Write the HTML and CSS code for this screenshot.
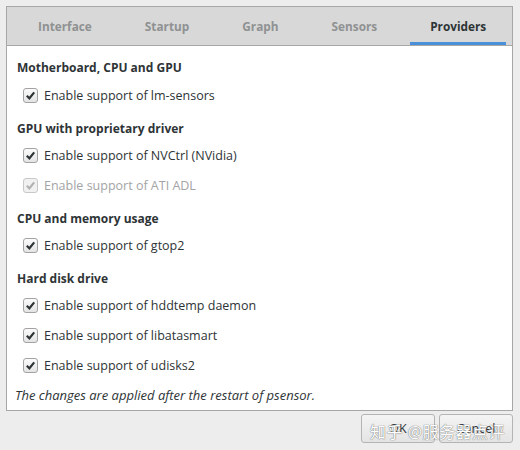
FILE: index.html
```html
<!DOCTYPE html>
<html>
<head>
<meta charset="utf-8">
<link rel="stylesheet" href="styles.css">
</head>
<body>
<div class="dialog">
  <div class="notebook">
    <div class="tabs">
      <div class="tab">Interface</div>
      <div class="tab">Startup</div>
      <div class="tab">Graph</div>
      <div class="tab">Sensors</div>
      <div class="tab active">Providers</div>
    </div>
    <div class="page">
      <div class="section">
        <div class="heading first">Motherboard, CPU and GPU</div>
        <label class="row"><span class="check"><svg viewBox="0 0 14 14"><path d="M3 7.2 L5.8 10 L11 3.6" /></svg></span>Enable support of lm-sensors</label>
      </div>
      <div class="section">
        <div class="heading">GPU with proprietary driver</div>
        <label class="row"><span class="check"><svg viewBox="0 0 14 14"><path d="M3 7.2 L5.8 10 L11 3.6" /></svg></span>Enable support of NVCtrl (NVidia)</label>
        <label class="row disabled"><span class="check"><svg viewBox="0 0 14 14"><path d="M3 7.2 L5.8 10 L11 3.6" /></svg></span>Enable support of ATI ADL</label>
      </div>
      <div class="section">
        <div class="heading">CPU and memory usage</div>
        <label class="row"><span class="check"><svg viewBox="0 0 14 14"><path d="M3 7.2 L5.8 10 L11 3.6" /></svg></span>Enable support of gtop2</label>
      </div>
      <div class="section">
        <div class="heading">Hard disk drive</div>
        <label class="row"><span class="check"><svg viewBox="0 0 14 14"><path d="M3 7.2 L5.8 10 L11 3.6" /></svg></span>Enable support of hddtemp daemon</label>
        <label class="row"><span class="check"><svg viewBox="0 0 14 14"><path d="M3 7.2 L5.8 10 L11 3.6" /></svg></span>Enable support of libatasmart</label>
        <label class="row"><span class="check"><svg viewBox="0 0 14 14"><path d="M3 7.2 L5.8 10 L11 3.6" /></svg></span>Enable support of udisks2</label>
      </div>
      <div class="note">The changes are applied after the restart of psensor.</div>
    </div>
  </div>
  <div class="actions">
    <button class="btn">OK</button>
    <button class="btn">Cancel</button>
    <span class="watermark">知乎 @服务器点评</span>
  </div>
</div>
</body>
</html>
```
FILE: styles.css
```css
html, body {
  margin: 0;
  padding: 0;
  background: #ededed;
  font-family: "Open Sans", "Noto Sans", "Noto Sans CJK SC", sans-serif;
  font-size: 12.5px;
  color: #2e3436;
}
.dialog {
  padding: 6px 7px 0 6px;
}
.notebook {
  border: 1px solid #a7a7a7;
  background: #ffffff;
  height: 403px;
  display: flex;
  flex-direction: column;
}
.tabs {
  height: 38px;
  background: #d8d8d8;
  border-bottom: 1px solid #a7a7a7;
  display: flex;
  align-items: stretch;
  padding-left: 11px;
  gap: 13px;
}
.tab {
  padding: 0 20px;
  display: flex;
  align-items: center;
  font-weight: bold;
  font-size: 11.8px;
  color: #8f9192;
  border-bottom: 3px solid transparent;
  padding-top: 3px;
}
.tab.active {
  color: #2e3436;
  border-bottom-color: #4a90d9;
}
.page {
  flex: 1;
  padding: 13px 10px 0 10px;
}
.heading {
  font-weight: bold;
  font-size: 12px;
  line-height: 18px;
  margin-top: 10px;
  margin-bottom: 2px;
}
.heading.first {
  margin-top: 0;
  margin-bottom: 3px;
}
.row {
  display: flex;
  align-items: center;
  height: 30px;
  padding-left: 6px;
}
.check {
  width: 13px;
  height: 13px;
  border: 1px solid #a3a3a3;
  border-radius: 3px;
  background: linear-gradient(#fbfbfb, #e4e4e4);
  margin-right: 6px;
  display: flex;
}
.check svg {
  width: 13px;
  height: 13px;
}
.check path {
  fill: none;
  stroke: #2e3436;
  stroke-width: 2.3;
}
.row.disabled {
  color: #a2a4a5;
}
.row.disabled .check {
  border-color: #c8c8c8;
  background: #f1f1f1;
}
.row.disabled .check path {
  stroke: #b0b2b3;
}
.note {
  font-style: italic;
  font-size: 13px;
  margin-top: 6px;
  margin-left: -2px;
  line-height: 18px;
}
.actions {
  position: relative;
  display: flex;
  justify-content: flex-end;
  gap: 4px;
  padding-top: 3px;
}
.btn {
  width: 74px;
  height: 29px;
  border: 1px solid #b4b4b4;
  border-radius: 3px;
  background: linear-gradient(#f4f4f4, #e4e4e4);
  font-family: inherit;
  font-size: 12.5px;
  color: #2e3436;
}
.watermark {
  position: absolute;
  right: 8px;
  top: 8px;
  font-size: 16px;
  color: #ffffff;
  text-shadow: 0 0 1px #777, 0 0 1px #777;
  letter-spacing: 0.5px;
}
```
